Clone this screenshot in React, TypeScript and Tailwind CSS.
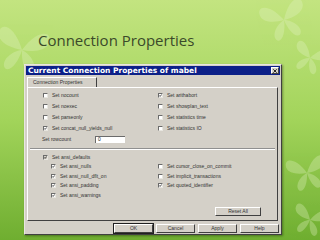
import React from 'react';

type Opt = { label: string; checked: boolean; grey?: boolean };

const topLeft: Opt[] = [
  { label: 'Set nocount', checked: false },
  { label: 'Set noexec', checked: false },
  { label: 'Set parseonly', checked: false },
  { label: 'Set concat_null_yields_null', checked: true },
];

const topRight: Opt[] = [
  { label: 'Set arithabort', checked: true },
  { label: 'Set showplan_text', checked: false },
  { label: 'Set statistics time', checked: false },
  { label: 'Set statistics IO', checked: false },
];

const ansiLeft: Opt[] = [
  { label: 'Set ansi_nulls', checked: true },
  { label: 'Set ansi_null_dflt_on', checked: true },
  { label: 'Set ansi_padding', checked: true },
  { label: 'Set ansi_warnings', checked: true },
];

const ansiRight: Opt[] = [
  { label: 'Set cursor_close_on_commit', checked: false },
  { label: 'Set implicit_transactions', checked: false },
  { label: 'Set quoted_identifier', checked: true },
];

const Check: React.FC<{ checked: boolean; grey?: boolean }> = ({ checked, grey }) => (
  <span
    className={`w-[5px] h-[5px] shrink-0 border-t border-l border-t-[#6b6b6b] border-l-[#6b6b6b] border-r border-b border-r-[#e8e6e0] border-b-[#e8e6e0] flex items-center justify-center ${grey ? 'bg-[#d4d0c8]' : 'bg-white'}`}
  >
    {checked && (
      <svg width="3" height="3" viewBox="0 0 3 3">
        <path d="M0.2 1.4 L1.1 2.4 L2.8 0.4" stroke="#222" strokeWidth="0.8" fill="none" />
      </svg>
    )}
  </span>
);

const Row: React.FC<{ opt: Opt; h: string }> = ({ opt, h }) => (
  <div className={`flex items-center gap-[4px] ${h}`}>
    <Check checked={opt.checked} grey={opt.grey} />
    <span className="text-[5px] leading-none text-[#333] whitespace-nowrap">{opt.label}</span>
  </div>
);

const WinButton: React.FC<{ label: string; def?: boolean; w?: string }> = ({ label, def, w = 'w-[39px]' }) => (
  <div
    className={`${w} h-[9px] bg-[#d4d0c8] border border-t-white border-l-white border-r-[#404040] border-b-[#404040] flex items-center justify-center ${def ? 'outline outline-1 outline-[#202020]' : ''}`}
  >
    <span className="text-[5px] leading-none text-[#333]">{label}</span>
  </div>
);

const Butterfly: React.FC<{ className: string; size: number; rotate?: number }> = ({ className, size, rotate = 0 }) => (
  <svg
    className={`absolute ${className}`}
    width={size}
    height={size}
    viewBox="0 0 40 40"
    style={{ transform: `rotate(${rotate}deg)` }}
  >
    <g fill="#e4f3c4" opacity="0.32">
      <path d="M20 20 C12 4 2 4 3 12 C4 18 12 20 20 20 Z" />
      <path d="M20 20 C28 4 38 4 37 12 C36 18 28 20 20 20 Z" />
      <path d="M20 20 C13 22 7 30 11 34 C15 36 19 28 20 20 Z" />
      <path d="M20 20 C27 22 33 30 29 34 C25 36 21 28 20 20 Z" />
    </g>
  </svg>
);

export default function App() {
  return (
    <div className="w-[320px] h-[240px] overflow-hidden relative bg-gradient-to-b from-[#c3e480] via-[#a2d45a] to-[#6fae30] font-['Liberation_Sans',Arial,sans-serif]">
      <Butterfly className="left-[258px] top-[-6px]" size={52} rotate={-15} />
      <Butterfly className="left-[290px] top-[38px]" size={40} rotate={20} />
      <Butterfly className="left-[-8px] top-[20px]" size={60} rotate={10} />
      <Butterfly className="left-[284px] top-[150px]" size={46} rotate={-10} />
      <Butterfly className="left-[290px] top-[200px]" size={40} rotate={15} />

      <div className="relative flex flex-col pl-[24px] pt-[30px]">
        <h1 className="ml-[14px] text-[15px] leading-[20px] text-[#3b4a2a] font-['Open_Sans',sans-serif] font-normal">
          Connection Properties
        </h1>

        {/* dialog */}
        <div className="mt-[14px] w-[258px] h-[171px] bg-[#d4d0c8] border border-t-[#e8e6df] border-l-[#e8e6df] border-r-[#404040] border-b-[#404040] flex flex-col px-[1px] pt-[1px] shadow-[1px_1px_2px_rgba(0,0,0,0.35)]">
          <div className="h-[9px] bg-[#0c2088] flex items-center justify-between pl-[2px] pr-[1px]">
            <span className="text-white font-bold text-[7.5px] leading-none whitespace-nowrap font-['DejaVu_Sans',sans-serif]">
              Current Connection Properties of mabel
            </span>
            <span className="w-[8px] h-[7px] bg-[#d4d0c8] border border-t-white border-l-white border-r-[#404040] border-b-[#404040] flex items-center justify-center">
              <svg width="4" height="4" viewBox="0 0 4 4">
                <path d="M0.3 0.3 L3.7 3.7 M3.7 0.3 L0.3 3.7" stroke="#111" strokeWidth="0.9" />
              </svg>
            </span>
          </div>

          {/* tab strip */}
          <div className="h-[11px] flex items-end pl-[1px] mt-[1px]">
            <div className="h-[10px] w-[70px] border-t border-l border-t-white border-l-white border-r border-r-[#404040] flex items-center pl-[5px]">
              <span className="text-[5px] leading-none text-[#333] whitespace-nowrap">Connection Properties</span>
            </div>
          </div>

          {/* tab page */}
          <div className="ml-[1px] w-[251px] h-[134px] border border-t-white border-l-white border-r-[#404040] border-b-[#404040] flex flex-col pt-[2px]">
            <div className="grid grid-cols-[115px_1fr] pl-[15px]">
              <div className="flex flex-col">
                {topLeft.map((o) => (
                  <Row key={o.label} opt={o} h="h-[11px]" />
                ))}
              </div>
              <div className="flex flex-col">
                {topRight.map((o) => (
                  <Row key={o.label} opt={o} h="h-[11px]" />
                ))}
              </div>
            </div>

            <div className="h-[10px] flex items-center pl-[14px]">
              <span className="w-[53px] text-[5px] leading-none text-[#333]">Set rowcount</span>
              <div className="w-[30px] h-[7px] bg-white border-t border-l border-t-[#6b6b6b] border-l-[#6b6b6b] flex items-center pl-[2px]">
                <span className="text-[5px] leading-none text-[#222]">0</span>
              </div>
            </div>

            <div className="mt-[4px] mx-[2px] h-[2px] border-t border-t-[#909090] border-b border-b-white" />

            <div className="pl-[15px] mt-[2px]">
              <Row opt={{ label: 'Set ansi_defaults', checked: true, grey: true }} h="h-[10px]" />
            </div>

            <div className="grid grid-cols-[107px_1fr] pl-[23px]">
              <div className="flex flex-col">
                {ansiLeft.map((o) => (
                  <Row key={o.label} opt={o} h="h-[9.5px]" />
                ))}
              </div>
              <div className="flex flex-col">
                {ansiRight.map((o) => (
                  <Row key={o.label} opt={o} h="h-[9.5px]" />
                ))}
              </div>
            </div>

            <div className="flex justify-end pr-[16px] mt-[7px]">
              <WinButton label="Reset All" w="w-[46px]" />
            </div>
          </div>

          {/* bottom buttons */}
          <div className="flex justify-end gap-[3px] mt-[3px] pr-[1px]">
            <WinButton label="OK" def />
            <WinButton label="Cancel" />
            <WinButton label="Apply" />
            <WinButton label="Help" />
          </div>
        </div>
      </div>
    </div>
  );
}
